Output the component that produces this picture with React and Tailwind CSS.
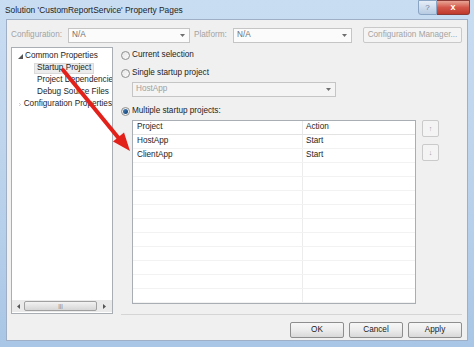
import React from 'react';

const font = "font-['Segoe_UI','Liberation_Sans',Arial,sans-serif]";

function Radio({ checked, label, className = '' }) {
    return (
        <div className={`flex items-center h-[12px] ${className}`}>
            <span className="w-[9px] h-[9px] rounded-full border border-[#8e8f8f] bg-gradient-to-br from-[#e6e6e6] to-[#fbfbfb] flex items-center justify-center">
                {checked && <span className="w-[5px] h-[5px] rounded-full bg-gradient-to-br from-[#4a86c2] to-[#0d3d6f]" />}
            </span>
            <span className="ml-[2px] text-[#222]">{label}</span>
        </div>
    );
}

function Combo({ value, className = '', textClass = 'text-[#6d6d6d]' }) {
    return (
        <div className={`flex items-center justify-between border border-[#c5c5c5] pl-[3px] pr-[4px] ${className}`}>
            <span className={textClass}>{value}</span>
            <svg width="5" height="3" viewBox="0 0 5 3"><path d="M0 0h5L2.5 3z" fill="#6f6f6f" /></svg>
        </div>
    );
}

function Button({ children }) {
    return (
        <div className="w-[54px] h-[16px] border border-[#8e8e8e] rounded-[2px] bg-gradient-to-b from-[#f7f7f7] via-[#ececec] to-[#d9d9d9] flex items-center justify-center text-[#222]">
            {children}
        </div>
    );
}

export default function App() {
    const rows = Array.from({ length: 12 });
    return (
        <div className={`relative w-[474px] h-[347px] overflow-hidden bg-gradient-to-b from-[#c9ddf2] via-[#bcd3ec] to-[#a9c6e6] ${font} text-[8.2px] leading-none`}>
            {/* title bar */}
            <div className="flex justify-between h-[19px]">
                <div className="pl-[5px] pt-[6px] text-[8.4px] text-[#1e1e1e]">Solution 'CustomReportService' Property Pages</div>
                <div className="flex h-[15px] mr-[4px]">
                    <div className="w-[19px] border border-[#8aa4c4] rounded-bl-[3px] bg-gradient-to-b from-[#e6eef8] to-[#b7cbe2] flex items-center justify-center text-[#6b7f99] text-[8px]">?</div>
                    <div className="w-[33px] border border-[#8c3a36] border-l-0 rounded-br-[3px] bg-gradient-to-b from-[#e8a496] via-[#d2574a] to-[#c0392b] flex items-center justify-center text-white text-[9px] font-bold">x</div>
                </div>
            </div>

            {/* body */}
            <div className="mx-[6px] h-[322px] border border-[#9fb0c6] bg-[#f0f0f0] flex flex-col pl-[4px] pr-[5px] pt-[7px]">
                {/* configuration row */}
                <div className="flex items-center h-[16px] text-[#a3a3a3]">
                    <span className="w-[57px]">Configuration:</span>
                    <Combo value="N/A" className="w-[122px] h-[15px] bg-[#fbfbfb]" />
                    <span className="ml-[4px] w-[39px]">Platform:</span>
                    <Combo value="N/A" className="w-[119px] h-[15px] bg-[#fbfbfb]" />
                    <div className="ml-[11px] w-[99px] h-[16px] border border-[#c9c9c9] rounded-[2px] bg-[#f4f4f4] flex items-center justify-center">Configuration Manager...</div>
                </div>

                <div className="flex mt-[4px]">
                    {/* tree */}
                    <div className="w-[102px] h-[267px] border border-[#a9aeb5] bg-white flex flex-col justify-between overflow-hidden">
                        <div className="flex flex-col pt-[2px] text-[#1e1e1e] whitespace-nowrap">
                            <div className="flex items-center h-[12px]">
                                <svg className="ml-[6px] mr-[2px]" width="5" height="5" viewBox="0 0 5 5"><path d="M5 0v5H0z" fill="#555" /></svg>
                                <span>Common Properties</span>
                            </div>
                            <div className="h-[12px] flex items-center">
                                <span className="ml-[22px] px-[2px] h-[11px] flex items-center bg-[#ececec] border border-[#dadada]">Startup Project</span>
                            </div>
                            <div className="h-[12px] flex items-center pl-[25px]">Project Dependencies</div>
                            <div className="h-[12px] flex items-center pl-[25px]">Debug Source Files</div>
                            <div className="flex items-center h-[12px]">
                                <svg className="ml-[7px] mr-[3px]" width="3" height="5" viewBox="0 0 3 5"><path d="M0 0l3 2.5L0 5" fill="none" stroke="#9a9a9a" strokeWidth="0.8" /></svg>
                                <span>Configuration Properties</span>
                            </div>
                        </div>
                        <div className="h-[12px] mb-[1px] flex items-center bg-[#eaeaea]">
                            <svg className="ml-[5px]" width="3" height="5" viewBox="0 0 3 5"><path d="M3 0v5L0 2.5z" fill="#555" /></svg>
                            <div className="ml-[4px] w-[73px] h-[10px] border border-[#a0a0a0] rounded-[2px] bg-gradient-to-b from-[#f2f2f2] to-[#d6d6d6] flex items-center justify-center text-[6px] text-[#777]">|||</div>
                            <svg className="ml-[6px]" width="3" height="5" viewBox="0 0 3 5"><path d="M0 0v5L3 2.5z" fill="#555" /></svg>
                        </div>
                    </div>

                    {/* right panel */}
                    <div className="ml-[8px] flex-1 flex flex-col">
                        <Radio label="Current selection" className="mt-[2px]" />
                        <Radio label="Single startup project" className="mt-[6px]" />
                        <Combo value="HostApp" className="ml-[11px] mt-[3px] w-[204px] h-[15px] bg-[#f4f4f4]" textClass="text-[#a0a0a0]" />
                        <Radio checked label="Multiple startup projects:" className="mt-[8px]" />
                        <div className="flex mt-[3px]">
                            <div className="ml-[11px] w-[284px] h-[184px] border border-[#a9aeb5] bg-white overflow-hidden text-[#1e1e1e]">
                                <div className="flex h-[14px] border-b border-[#e3e3e3]">
                                    <div className="w-[170px] pl-[4px] flex items-center border-r border-[#e8e8e8]">Project</div>
                                    <div className="flex-1 pl-[3px] flex items-center">Action</div>
                                </div>
                                {[['HostApp', 'Start'], ['ClientApp', 'Start']].concat(rows.map(() => ['', ''])).map((r, i) => (
                                    <div key={i} className="flex h-[14px] border-b border-[#f2f2f2]">
                                        <div className="w-[170px] pl-[4px] flex items-center border-r border-[#ececec]">{r[0]}</div>
                                        <div className="flex-1 pl-[3px] flex items-center">{r[1]}</div>
                                    </div>
                                ))}
                            </div>
                            <div className="ml-[6px] flex flex-col gap-[7px]">
                                <div className="w-[17px] h-[17px] border border-[#cacaca] rounded-[2px] bg-[#f4f4f4] flex items-center justify-center text-[#9a9a9a] text-[7px]">↑</div>
                                <div className="w-[17px] h-[17px] border border-[#cacaca] rounded-[2px] bg-[#f4f4f4] flex items-center justify-center text-[#9a9a9a] text-[7px]">↓</div>
                            </div>
                        </div>
                        <div className="mt-[10px] h-[2px] border-t border-[#d5d5d5] border-b-white" />
                        <div className="mt-[6px] flex justify-end gap-[5px] pr-[0px]">
                            <Button>OK</Button>
                            <Button>Cancel</Button>
                            <Button>Apply</Button>
                        </div>
                    </div>
                </div>
            </div>

            {/* red annotation arrow */}
            <svg className="absolute left-0 top-0 pointer-events-none" width="474" height="347">
                <line x1="63" y1="70" x2="121" y2="141" stroke="#e3211b" strokeWidth="4" strokeLinecap="round" />
                <polygon points="130,151 113,141.5 124,132.5" fill="#e3211b" />
            </svg>
        </div>
    );
}
